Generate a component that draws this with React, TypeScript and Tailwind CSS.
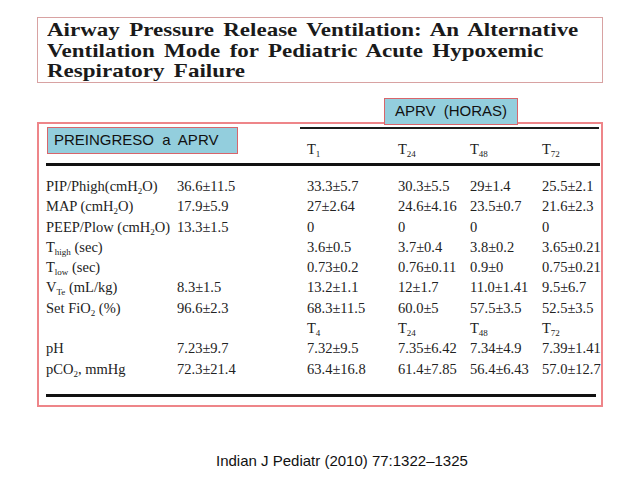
import React from "react";

const serif = { fontFamily: '"Liberation Serif", "Times New Roman", serif' };
const sans = { fontFamily: '"Liberation Sans", Arial, sans-serif' };

type Row = { label: React.ReactNode; pre: string; t: string[] };

const Sub = ({ children }: { children: React.ReactNode }) => (
  <sub className="text-[9px] align-baseline relative top-[3px]">{children}</sub>
);

const rows: Row[] = [
  { label: <>PIP/Phigh(cmH<Sub>2</Sub>O)</>, pre: "36.6±11.5", t: ["33.3±5.7", "30.3±5.5", "29±1.4", "25.5±2.1"] },
  { label: <>MAP (cmH<Sub>2</Sub>O)</>, pre: "17.9±5.9", t: ["27±2.64", "24.6±4.16", "23.5±0.7", "21.6±2.3"] },
  { label: <>PEEP/Plow (cmH<Sub>2</Sub>O)</>, pre: "13.3±1.5", t: ["0", "0", "0", "0"] },
  { label: <>T<Sub>high</Sub> (sec)</>, pre: "", t: ["3.6±0.5", "3.7±0.4", "3.8±0.2", "3.65±0.21"] },
  { label: <>T<Sub>low</Sub> (sec)</>, pre: "", t: ["0.73±0.2", "0.76±0.11", "0.9±0", "0.75±0.21"] },
  { label: <>V<Sub>Te</Sub> (mL/kg)</>, pre: "8.3±1.5", t: ["13.2±1.1", "12±1.7", "11.0±1.41", "9.5±6.7"] },
  { label: <>Set FiO<Sub>2</Sub> (%)</>, pre: "96.6±2.3", t: ["68.3±11.5", "60.0±5", "57.5±3.5", "52.5±3.5"] },
  { label: "", pre: "", t: ["T4", "T24", "T48", "T72"] },
  { label: "pH", pre: "7.23±9.7", t: ["7.32±9.5", "7.35±6.42", "7.34±4.9", "7.39±1.41"] },
  { label: <>pCO<Sub>2</Sub>, mmHg</>, pre: "72.3±21.4", t: ["63.4±16.8", "61.4±7.85", "56.4±6.43", "57.0±12.7"] },
];

const TLabel = ({ s }: { s: string }) => (
  <>
    T<Sub>{s.slice(1)}</Sub>
  </>
);

const cols = "grid grid-cols-[131px_130px_91px_72px_72px_58px]";

export default function App() {
  return (
    <div className="w-[638px] h-[478px] bg-white overflow-hidden flex flex-col">
      {/* Title */}
      <div className="ml-[37px] mt-[17px] w-[566px] h-[66px] border border-[#d8a2a2] pl-[9px] pt-[2px]">
        <div
          className="origin-left scale-x-[1.21] text-[19px] leading-[20.5px] font-bold text-[#1a1a1a] [word-spacing:3px] whitespace-nowrap"
          style={serif}
        >
          <div>Airway Pressure Release Ventilation: An Alternative</div>
          <div>Ventilation Mode for Pediatric Acute Hypoxemic</div>
          <div>Respiratory Failure</div>
        </div>
      </div>

      {/* APRV label */}
      <div
        className="relative z-10 ml-[384px] mt-[15px] w-[134px] h-[27px] bg-[#93cedd] border border-[#d8656b] flex items-center justify-center text-[15px] text-[#111] [word-spacing:4px]"
        style={sans}
      >
        APRV (HORAS)
      </div>

      {/* Table box */}
      <div
        className="-mt-[3px] ml-[37px] w-[566px] h-[285px] border-2 border-[#ee8589] flex flex-col pl-[7px] text-[14.5px] text-[#222]"
        style={serif}
      >
        {/* header */}
        <div className="relative h-[39px]">
          <div className="absolute left-[254px] right-[2px] top-[3px] h-[2px] bg-[#1a1a1a]" />
          <div
            className="absolute left-[1px] top-[3px] w-[191px] h-[27px] bg-[#93cedd] border border-[#d8656b] flex items-center pl-[6px] text-[15px] text-[#111] [word-spacing:4px]"
            style={sans}
          >
            PREINGRESO a APRV
          </div>
          <div className={`${cols} pt-[15px]`}>
            <div />
            <div />
            <div><TLabel s="T1" /></div>
            <div><TLabel s="T24" /></div>
            <div><TLabel s="T48" /></div>
            <div><TLabel s="T72" /></div>
          </div>
        </div>
        <div className="h-[3px] bg-[#111] mr-[1px]" />
        <div className="pt-[10px] flex flex-col">
          {rows.map((r, i) => (
            <div key={i} className={`${cols} h-[20.3px] leading-[20px]`}>
              <div className="whitespace-nowrap">{r.label}</div>
              <div>{r.pre}</div>
              {r.t.map((v, j) => (
                <div key={j} className="whitespace-nowrap">
                  {i === 7 ? <TLabel s={v} /> : v}
                </div>
              ))}
            </div>
          ))}
        </div>
        <div className="mt-[15px] h-[3px] bg-[#111] mr-[5px]" />
      </div>

      {/* citation */}
      <div className="mt-[43px] ml-[216px] text-[15px] text-[#111]" style={sans}>
        Indian J Pediatr (2010) 77:1322–1325
      </div>
    </div>
  );
}
